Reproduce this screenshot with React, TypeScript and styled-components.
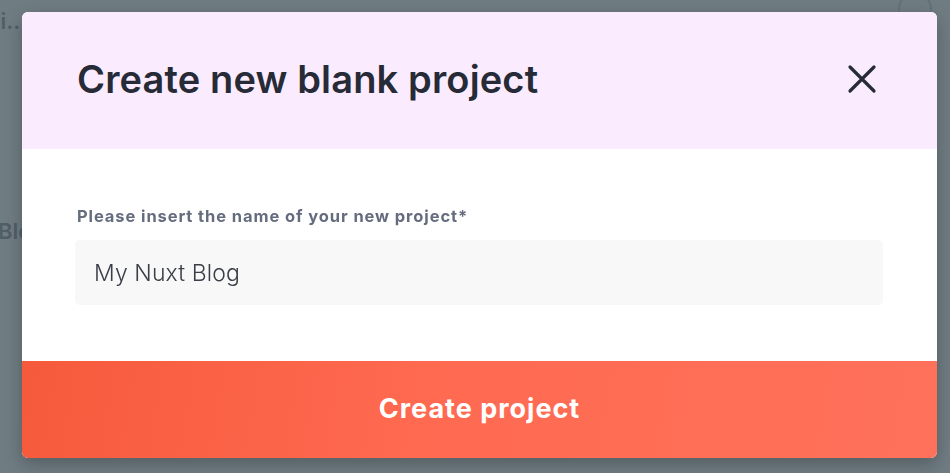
import React from "react";
import styled, { createGlobalStyle } from "styled-components";

const Global = createGlobalStyle`
  html, body { margin: 0; padding: 0; }
  body {
    width: 950px;
    height: 473px;
    overflow: hidden;
    background: #f3f5f6;
    font-family: Inter, "Noto Sans", "Liberation Sans", sans-serif;
  }
`;

const Page = styled.div`
  position: relative;
  width: 950px;
  height: 473px;
  padding: 8px 0 0 0;
  box-sizing: border-box;
  display: flex;
  flex-direction: column;
  gap: 184px;
  color: #1f2937;
`;

const PageText = styled.div`
  font-size: 22px;
  font-weight: 600;
  margin-left: ${(p: { $indent: number }) => p.$indent}px;
`;

const Avatar = styled.div`
  position: absolute;
  top: -8px;
  right: 18px;
  width: 30px;
  height: 30px;
  border-radius: 50%;
  border: 2px solid #a4aeb3;
`;

const Backdrop = styled.div`
  position: fixed;
  inset: 0;
  background: rgba(88, 104, 111, 0.86);
  display: flex;
  align-items: flex-start;
  justify-content: flex-start;
  padding: 12px 0 0 22px;
  box-sizing: border-box;
`;

const Modal = styled.div`
  width: 915px;
  height: 446px;
  border-radius: 6px;
  overflow: hidden;
  background: #ffffff;
  box-shadow: 0 6px 18px rgba(0, 0, 0, 0.25);
  display: flex;
  flex-direction: column;
`;

const Header = styled.div`
  height: 137px;
  flex: none;
  background: #fbebfe;
  display: flex;
  align-items: center;
  justify-content: space-between;
  padding: 0 60px 0 55px;
  box-sizing: border-box;
`;

const Title = styled.h1`
  margin: 0;
  font-size: 38px;
  font-weight: 600;
  color: #262b37;
  letter-spacing: 0.15px;
  padding-bottom: 4px;
`;

const CloseButton = styled.button`
  border: 0;
  background: transparent;
  padding: 0;
  width: 30px;
  height: 30px;
  display: flex;
  align-items: center;
  justify-content: center;
  cursor: pointer;
  margin-bottom: 4px;
`;

const Body = styled.div`
  flex: 1;
  padding: 57px 54px 0 53px;
  display: flex;
  flex-direction: column;
  gap: 14px;
`;

const Label = styled.label`
  font-size: 16.5px;
  font-weight: 700;
  color: #646c7e;
  letter-spacing: 0.9px;
  padding-left: 2px;
`;

const Input = styled.input`
  height: 65px;
  border: 0;
  border-radius: 5px;
  background: #f8f8f8;
  padding: 0 19px;
  font-family: Inter, "Noto Sans", "Liberation Sans", sans-serif;
  font-size: 23px;
  font-weight: 300;
  letter-spacing: 0.1px;
  color: #3a3e48;
  outline: none;
  box-sizing: border-box;
  width: 100%;
`;

const Submit = styled.button`
  height: 97px;
  flex: none;
  border: 0;
  background: linear-gradient(100deg, #f65a3c 0%, #ff6a51 45%, #ff715b 100%);
  color: #ffffff;
  font-family: Inter, "Noto Sans", "Liberation Sans", sans-serif;
  font-size: 27px;
  font-weight: 700;
  letter-spacing: 1px;
  cursor: pointer;
  padding-bottom: 4px;
`;

export default function App() {
  return (
    <>
      <Global />
      <Page>
        <PageText $indent={-14}>Ti...</PageText>
        <PageText $indent={-2}>Blog</PageText>
        <Avatar />
      </Page>
      <Backdrop>
        <Modal>
          <Header>
            <Title>Create new blank project</Title>
            <CloseButton aria-label="Close">
              <svg width="30" height="30" viewBox="0 0 30 30" fill="none">
                <path
                  d="M3 3 L27 27 M27 3 L3 27"
                  stroke="#262b37"
                  strokeWidth="3.2"
                  strokeLinecap="round"
                />
              </svg>
            </CloseButton>
          </Header>
          <Body>
            <Label htmlFor="project-name">Please insert the name of your new project*</Label>
            <Input id="project-name" defaultValue="My Nuxt Blog" />
          </Body>
          <Submit>Create project</Submit>
        </Modal>
      </Backdrop>
    </>
  );
}
